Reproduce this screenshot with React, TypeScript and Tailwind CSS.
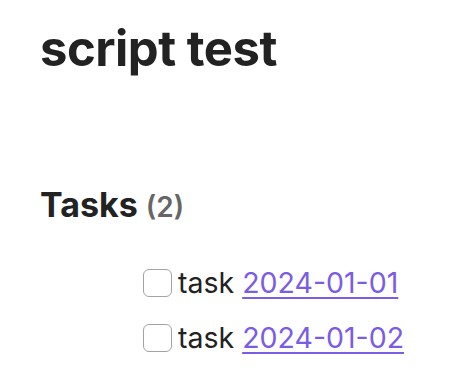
export default function App() {
  const tasks = ["2024-01-01", "2024-01-02"];

  return (
    <div className="min-h-screen bg-white px-[40px] text-[#222222]" style={{ fontFamily: "Inter, 'Noto Sans', sans-serif" }}>
      <h1 className="pt-[19px] text-[49px] font-bold leading-[60px] tracking-[-0.5px]">script test</h1>

      <h2 className="mt-[104px] text-[34px] font-bold leading-[44px]">
        Tasks <span className="text-[28px] font-semibold text-[#666666]">(2)</span>
      </h2>

      <ul className="mt-[40px] flex flex-col gap-[27px] pl-[103px]">
        {tasks.map((d) => (
          <li key={d} className="flex items-center gap-[6px] text-[28.5px] leading-[28px]">
            <span className="block h-[28px] w-[29px] shrink-0 rounded-[6px] border-[1.5px] border-[#a3a3a3] bg-white" />
            <span>
              task{" "}
              <a href="#" className="text-[#7b5ce5] underline decoration-[2px] underline-offset-[4px]">
                {d}
              </a>
            </span>
          </li>
        ))}
      </ul>
    </div>
  );
}
